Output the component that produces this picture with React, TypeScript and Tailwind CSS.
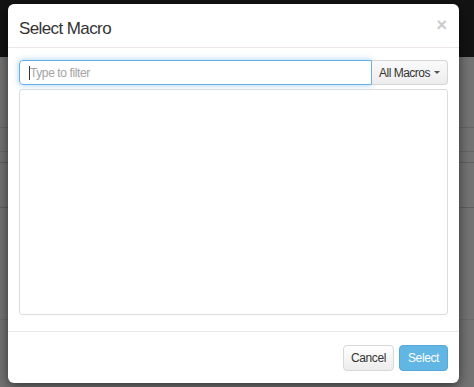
const font = { fontFamily: '"Liberation Sans", Arial, sans-serif' }

export default function App() {
  return (
    <div className="relative w-[474px] h-[387px] overflow-hidden bg-[#737373]" style={font}>
      {/* backdrop: dimmed page behind the modal */}
      <div className="h-[57px] bg-[#131313]" />
      <div className="flex flex-col">
        <div className="h-[71px] border-b border-[#666]" />
        <div className="h-[24px] border-b border-[#666]" />
        <div className="h-[11px] border-b border-[#5f5f5f]" />
        <div className="h-[45px] border-b border-[#5f5f5f]" />
        <div className="h-[112px] border-b border-[#6a6a6a]" />
      </div>

      {/* modal */}
      <div className="absolute left-[8px] top-[4px] w-[451px] h-[379px] bg-white rounded-[6px] shadow-[0_3px_12px_rgba(0,0,0,0.55)] flex flex-col">
        <div className="h-[44px] flex items-center justify-between pl-[11px] pr-[12px] border-b border-[#ece6ea]">
          <h3 className="text-[17px] tracking-[-0.6px] leading-none text-[#333] pt-[5px]">Select Macro</h3>
          <span className="text-[18px] leading-none font-bold text-[#cbcbcb] -mt-[2px]">×</span>
        </div>

        <div className="flex-1 flex flex-col px-[11px] pt-[12px] pb-[15px]">
          <div className="flex h-[25px]">
            <div className="flex-1 flex items-center border border-[#66afe9] rounded-l-[4px] shadow-[0_0_6px_rgba(102,175,233,0.6)] pl-[9px]">
              <span className="w-px h-[14px] bg-[#333]" />
              <span className="text-[12px] tracking-[-0.4px] text-[#a3a3a3]">Type to filter</span>
            </div>
            <div className="w-[76px] flex items-center justify-center gap-[4px] border border-l-0 border-[#d6d6d6] rounded-r-[4px] bg-gradient-to-b from-[#fafafa] to-[#ededed] text-[12px] tracking-[-0.5px] text-[#333]">
              All Macros
              <span className="w-0 h-0 border-l-[3px] border-r-[3px] border-t-[3px] border-l-transparent border-r-transparent border-t-[#555]" />
            </div>
          </div>
          <div className="mt-[4px] h-[226px] border border-[#dcdcdc] rounded-[3px]" />
        </div>

        <div className="h-[52px] border-t border-[#e8e8e8] flex items-start justify-end gap-[5px] pt-[13px] pr-[11px]">
          <button className="w-[51px] h-[26px] rounded-[4px] border border-[#d8d8d8] bg-gradient-to-b from-white to-[#ececec] text-[12px] tracking-[-0.4px] text-[#333]">
            Cancel
          </button>
          <button className="w-[49px] h-[26px] rounded-[4px] border border-[#55a9d8] bg-[#62b6e4] text-[12px] tracking-[-0.4px] text-white">
            Select
          </button>
        </div>
      </div>
    </div>
  )
}
